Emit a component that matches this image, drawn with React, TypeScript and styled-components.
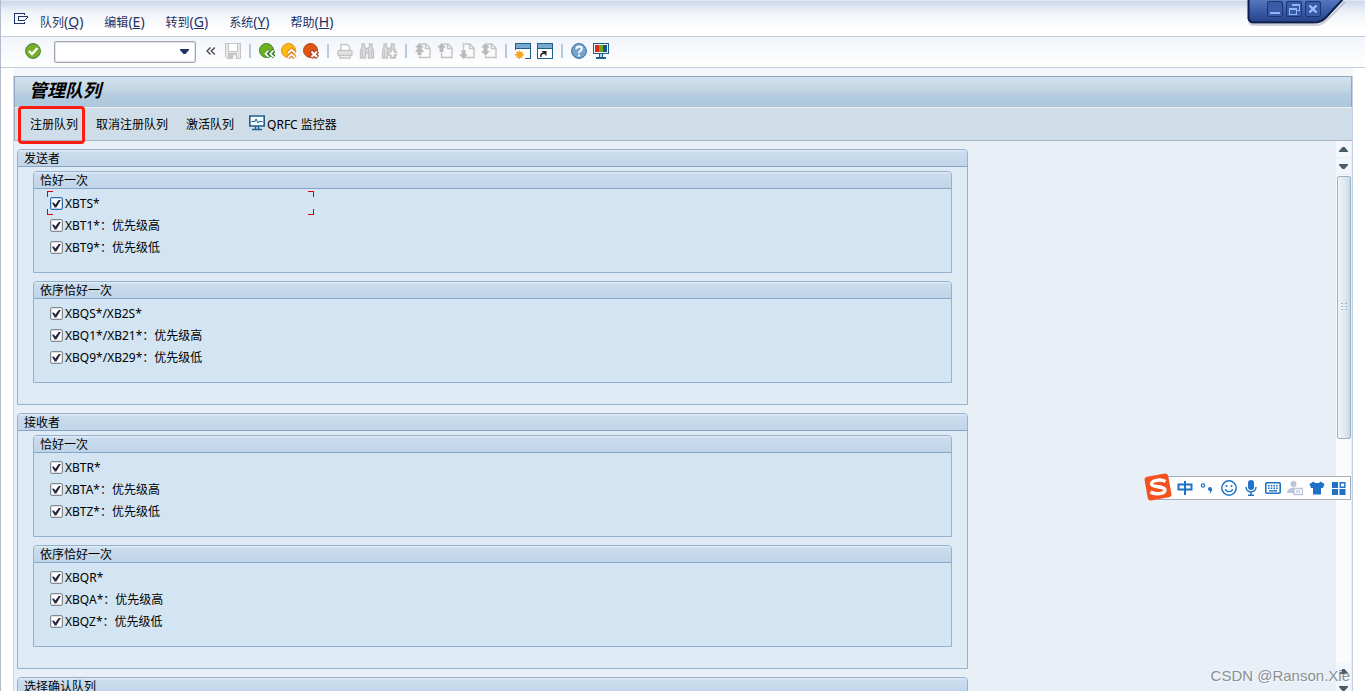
import React from 'react';
import styled, { createGlobalStyle, css } from 'styled-components';

const GlobalStyle = createGlobalStyle`
  *, *::before, *::after { box-sizing: border-box; }
  html, body { margin: 0; }
  body, button, input, select {
    font-family: "Noto Sans", "Noto Sans CJK SC", sans-serif;
    font-size: 12px;
    line-height: 16px;
    color: #000;
  }
  button { padding: 0; border: 0; background: none; }
  svg { display: block; }
`;

const Shell = styled.div`
  height: 100vh;
  display: flex;
  flex-direction: column;
  overflow: hidden;
  background: #fff;
  border-left: 1px solid #b2bccc;
`;

const MenuBar = styled.nav`
  flex: none;
  display: flex;
  align-items: center;
  height: 37px;
  padding: 8px 0 0 13px;
  gap: 21px;
  border-top: 1px solid #dfe7f2;
  border-bottom: 1px solid #c3cbdb;
  background: linear-gradient(#cbd8ea, #eef2f8 30%, #fff 80%);
`;

const SystemButton = styled.button`
  width: 15px;
  height: 12px;
  margin: 0 -10px 8px 0;
`;

const MenuItem = styled.button`
  color: #1f3263;
  white-space: nowrap;
`;

const AccessKey = styled.span`
  font-size: 14px;
`;

const CommandBar = styled.div`
  flex: none;
  display: flex;
  align-items: center;
  height: 31px;
  padding: 0 21px;
  border-bottom: 1px solid #c6cbdb;
  background: linear-gradient(#f1f4fa, #fff);
`;

const IconButton = styled.button`
  flex: none;
  width: 22px;
  height: 22px;
  padding-bottom: 2px;
  display: flex;
  align-items: center;
  justify-content: center;
`;

const Divider = styled.span`
  width: 2px;
  height: 14px;
  margin: 0 5px 2px;
  background: #b5cde3;
`;

const Combo = styled.div`
  position: relative;
  width: 142px;
  height: 22px;
  margin: 0 4px 0 10px;

  select {
    appearance: none;
    width: 100%;
    height: 100%;
    border: 1px solid #a3a8af;
    box-shadow: inset 0 0 0 1px #dfe2e6;
    border-radius: 2px;
    background: #fff;
  }
  svg {
    position: absolute;
    right: 7px;
    top: 8px;
    pointer-events: none;
  }
`;

const Workspace = styled.main`
  flex: 1;
  min-height: 0;
  display: flex;
  flex-direction: column;
  margin: 8px 12px 0 12px;
  border-left: 1px solid #cdd6e2;
  border-right: 1px solid #c2cfe0;
  box-shadow: 0 -8px 0 #f4f6fb;
`;

const TitleBar = styled.header`
  flex: none;
  height: 31px;
  padding: 0 14px;
  border: 1px solid #8fa9c2;
  border-bottom: 0;
  background: linear-gradient(#d3e2ee, #c1d5e4 45%, #b4ccdf 60%, #adc7dd);

  h1 {
    margin: 0;
    font-size: 18px;
    line-height: 26px;
    font-style: italic;
    font-weight: 700;
  }
`;

const ActionBar = styled.div`
  flex: none;
  display: flex;
  align-items: center;
  gap: 18px;
  height: 34px;
  padding: 2px 15px 0;
  border-left: 1px solid #a2b3c7;
  border-top: 1px solid #e6eff6;
  border-bottom: 1px solid #a5b3c6;
  background: #cfdde8;
`;

const ActionButton = styled.button<{ $marked?: boolean }>`
  position: relative;
  display: flex;
  align-items: center;
  gap: 2px;
  white-space: nowrap;

  svg { margin: 0 0 4px -3px; }

  ${p => p.$marked && css`
    &::after {
      content: '';
      position: absolute;
      inset: -11px -7px -11px -12px;
      border: 3px solid #fb1e10;
      border-radius: 4px;
      z-index: 1;
    }
  `}
`;

const Body = styled.div`
  flex: 1;
  min-height: 0;
  display: flex;
  background: #e8eff7;
`;

const Groups = styled.div`
  flex: 1;
  min-width: 0;
  overflow: hidden;
  padding: 8px 3px;
`;

const Group = styled.section`
  max-width: 951px;
  margin-bottom: 8px;
  border: 1px solid #94b1d1;
  border-radius: 4px 4px 0 0;
  background: #deeaf4;
`;

const GroupTitle = styled.h2`
  margin: 0;
  height: 17px;
  padding: 0 6px;
  font-size: 12px;
  font-weight: 400;
  line-height: 18px;
  border-bottom: 1px solid #86a5c8;
  border-radius: 3px 3px 0 0;
  background: linear-gradient(#e3edf6, #cbdced 15%, #bfd5e9);
`;

const GroupBody = styled.div`
  padding: 4px 15px 13px;
`;

const SubGroup = styled(Group)`
  background: #d3e5f3;
`;

const Row = styled.label`
  position: relative;
  display: flex;
  align-items: center;
  gap: 2px;
  width: 265px;
  height: 22px;
  padding-left: 1px;
`;

const Focus = styled.span`
  position: absolute;
  inset: -2px 0 0 -2px;
  pointer-events: none;
  --c: #d9000d;
  background:
    linear-gradient(var(--c), var(--c)) 0 0 / 6px 1px,
    linear-gradient(var(--c), var(--c)) 0 0 / 1px 6px,
    linear-gradient(var(--c), var(--c)) 100% 0 / 6px 1px,
    linear-gradient(var(--c), var(--c)) 100% 0 / 1px 6px,
    linear-gradient(var(--c), var(--c)) 0 100% / 6px 1px,
    linear-gradient(var(--c), var(--c)) 0 100% / 1px 6px,
    linear-gradient(var(--c), var(--c)) 100% 100% / 6px 1px,
    linear-gradient(var(--c), var(--c)) 100% 100% / 1px 6px;
  background-repeat: no-repeat;
`;

const Check = styled.input<{ $focused?: boolean }>`
  appearance: none;
  flex: none;
  width: 13px;
  height: 13px;
  margin: 0 0 2px;
  border: 1px solid ${p => (p.$focused ? '#2f6db0' : '#858a90')};
  border-radius: 2px;
  background: #fff;
  box-shadow: inset 0 0 0 1px ${p => (p.$focused ? '#bcd4ee' : '#dcdfe2')};

  &:checked::after {
    content: '';
    display: block;
    width: 9px;
    height: 8px;
    margin: 2px 1px 1px;
    background: #26263f;
    clip-path: polygon(0 42%, 20% 38%, 38% 64%, 78% 0, 100% 4%, 48% 100%, 30% 100%);
  }
`;

const ScrollBar = styled.div`
  flex: none;
  width: 15px;
  display: flex;
  flex-direction: column;
  margin: 0 1px -6px 0;
  background: #e9eef3;
`;

const ScrollButton = styled.button`
  flex: none;
  height: 16px;
  margin-bottom: 1px;
  display: flex;
  align-items: center;
  justify-content: center;
  background: #f3f6fa;
`;

const Track = styled.div`
  flex: 1;
  min-height: 0;
  padding: 1px 0 0 1px;
  background: #fafbfd;
`;

const Thumb = styled.div`
  height: 54%;
  display: flex;
  align-items: center;
  justify-content: center;
  border: 1px solid #9fb0c2;
  border-radius: 2px;
  background: linear-gradient(90deg, #f0f5f9, #e2ecf4 40%, #dbe7f0 65%, #c9d8e6);
`;

const WindowControls = styled.div`
  position: absolute;
  top: 0;
  right: 19px;
  width: 100px;
  height: 28px;

  > svg { position: absolute; inset: 0; }
`;

const WindowButtons = styled.div`
  position: relative;
  display: flex;
  gap: 3px;
  padding: 1px 0 0 21px;
`;

const WindowButton = styled.button`
  width: 16px;
  height: 16px;
  border: 1px solid #1b3576;
  border-radius: 2px;
  background: #3a5ba5;
`;

const ImeBar = styled.div`
  position: absolute;
  right: 14px;
  top: 476px;
  display: flex;
  align-items: center;
  height: 24px;
  padding: 1px 0 0 16px;
  border: 1px solid #a6adba;
  background: #fff;
`;

const ImeLogo = styled.div`
  position: absolute;
  left: -15px;
  top: -5px;
`;

const Watermark = styled.div`
  position: absolute;
  right: 15px;
  bottom: 5px;
  font-family: "Liberation Sans", sans-serif;
  font-size: 15px;
  line-height: 20px;
  color: #8b8f94;
  text-shadow: 1px 1px 0 #f8fafc;
`;

const GREY = '#c3c4c5';
const NAVY = '#1e5f8c';

const Svg = ({ children, w = 16, h = 16, crisp }: { children: React.ReactNode; w?: number; h?: number; crisp?: boolean }) => (
  <svg width={w} height={h} viewBox={`0 0 ${w} ${h}`} fill="none" shapeRendering={crisp ? 'crispEdges' : 'auto'} aria-hidden="true">
    {children}
  </svg>
);

const Ball = ({ fill, edge, children }: { fill: string; edge: string; children: React.ReactNode }) => (
  <Svg>
    <circle cx="7.5" cy="7.5" r="7" fill={fill} stroke={edge} />
    {children}
  </Svg>
);

const OkIcon = () => (
  <Svg>
    <circle cx="8" cy="8" r="7.4" fill="#76b02a" stroke="#3f7f3c" />
    <path d="M4 8l3 3 5.5-6" stroke="#fff" strokeWidth="2.4" />
  </Svg>
);

const BackIcon = () => (
  <Ball fill="#6fb01f" edge="#3c8428">
    <path d="M10.500 7.500L7.300 10.700l3.200 3.200M15.200 7.500L12 10.700l3.200 3.200" stroke="#3f8532" strokeWidth="4" />
    <path d="M9.500 7.500L6.300 10.700l3.200 3.200M14.500 7.500L11.300 10.700l3.200 3.200" stroke="#fff" strokeWidth="1.600" />
  </Ball>
);

const ExitIcon = () => (
  <Ball fill="#fdb813" edge="#e08a1b">
    <path d="M7 10.200l3.600-3.500 3.600 3.500M7 14.700l3.600-3.500 3.600 3.500" stroke="#e2801c" strokeWidth="4" />
    <path d="M7 10.200l3.600-3.500 3.600 3.500M7 14.700l3.600-3.500 3.600 3.500" stroke="#fff" strokeWidth="1.800" />
  </Ball>
);

const CancelIcon = () => (
  <Ball fill="#dd5613" edge="#b8471c">
    <path d="M8 8l6.500 6.500M14.500 8L8 14.500" stroke="#b03c18" strokeWidth="4.500" />
    <path d="M8.500 8.500l5.500 5.500M14 8.500L8.500 14" stroke="#fff" strokeWidth="2.200" />
  </Ball>
);

const SaveIcon = () => (
  <Svg crisp>
    <path d="M0 0h16v16H2l-2-2z" fill={GREY} />
    <path d="M1 1h14v14H2.500L1 13.500z" fill="#e6e6e7" />
    <path d="M3 0h10v9H3z" fill={GREY} />
    <path d="M4 1h8v7H4z" fill="#fff" />
    <path d="M3 10h9v6H3z" fill={GREY} />
    <path d="M8 12h3v4H8z" fill="#f4f4f5" />
  </Svg>
);

const PrintIcon = () => (
  <Svg>
    <path d="M4 7V1.500h6l2.500 2.500v3" fill="#fff" stroke={GREY} strokeWidth="1.400" />
    <rect x="1" y="7.500" width="14" height="5" rx="1" fill="#e4e4e5" stroke={GREY} strokeWidth="1.400" />
    <path d="M3 12.500v2.500h10v-2.500z" fill="#fff" stroke={GREY} strokeWidth="1.400" />
  </Svg>
);

const FindIcon = ({ more }: { more?: boolean }) => (
  <Svg>
    <path d="M3 1h2.500v3L7 5.500h2L10.500 4V1H13v3l1.500 4v7H9.500v-5h-3v5h-5V8L3 4z" fill="#dededf" stroke={GREY} strokeWidth="1.400" />
    <path d="M6.500 5.500V10M9.500 5.500V10M3.500 7v7M12.500 7v7" stroke={GREY} />
    {more && <path d="M10 6.500h3v2.500h2.500v3H13v2.500h-3V12H7.500V9H10z" fill="#fff" stroke={GREY} strokeWidth="1.400" />}
  </Svg>
);

const pageArrows = {
  first: 'M4.5 0L9 4.500H6.500v1L9 9H6.500v3h-4V9H0l2.500-3.500v-1H0z',
  previous: 'M4.5 0L9 4.500H6.500V9h-4V4.500H0z',
  next: 'M4.5 16L9 11.500H6.500V7h-4v4.500H0z',
  last: 'M4.5 0L9 4.500H6.500V8H9l-4.500 4.500L0 8h2.500V4.500H0z',
};

const PageIcon = ({ kind }: { kind: keyof typeof pageArrows }) => (
  <Svg>
    <path d="M4.500 1h6.500l4 4v9.500H4.500z" fill="#fafafb" stroke={GREY} strokeWidth="1.400" />
    <path d="M10.500 1v4.500H15" stroke={GREY} strokeWidth="1.400" />
    <path d={pageArrows[kind]} fill="#b9babb" stroke="#fafafb" strokeWidth="1" paintOrder="stroke" />
  </Svg>
);

const SessionIcon = ({ shortcut }: { shortcut?: boolean }) => (
  <Svg crisp>
    <path d="M0 0h16v16H0z" fill={NAVY} />
    <path d="M1 6h14v9H1z" fill="#fff" />
    <path d="M1 1h14v4H1z" fill="#79a9cf" />
    {shortcut ? (
      <g shapeRendering="auto">
        <path d="M4 14c-.5-2.500 0-3.500 3.500-4" stroke="#222" strokeWidth="1.500" />
        <path d="M4.500 8h5v5z" fill="#222" />
      </g>
    ) : (
      <g shapeRendering="auto">
        <path d="M0 7h10v9H0z" fill="#fff" />
        <path d="M4.500 7.500v8.500M0 11.700h9M1.500 8.700l6 6M7.500 8.700l-6 6" stroke="#f5a11a" strokeWidth="1.400" />
        <circle cx="4.500" cy="11.700" r="3" fill="#f9a51c" />
      </g>
    )}
  </Svg>
);

const HelpIcon = () => (
  <Svg>
    <circle cx="8" cy="8" r="7.400" fill="#76a5cc" stroke="#326c9e" />
    <path d="M5.300 6.300C5.300 4.500 6.500 3.500 8 3.500c1.600 0 2.800 1 2.800 2.500C10.800 7.800 8 8 8 10.200M8 11.500v2" stroke="#fff" strokeWidth="1.900" />
  </Svg>
);

const LayoutIcon = () => (
  <Svg crisp>
    <path d="M0 0h16v11H0z" fill={NAVY} />
    <path d="M1 1h14v9H1z" fill="#eef4f8" />
    <path d="M2 2h4v7H2z" fill="#d92a1c" />
    <path d="M6 2h4v7H6z" fill="#6ea91e" />
    <path d="M10 2h4v7h-4z" fill="#17558e" />
    <path d="M6 11h4v3H6zM3 14h10v2H3z" fill={NAVY} />
    <path d="M7 11h2v3H7z" fill="#b9d3e6" />
  </Svg>
);

const MonitorIcon = () => (
  <Svg>
    <path d="M.8 1h14.400v10H.8z" fill="#f5fafd" stroke={NAVY} strokeWidth="1.600" />
    <path d="M2.500 6.500h3.500l1-2.500 2 4 1-1.500h3.500" stroke={NAVY} />
    <path d="M6.500 11v3M9.500 11v3M3 14.500h10" stroke={NAVY} strokeWidth="1.400" />
  </Svg>
);

const SystemIcon = () => (
  <Svg w={15} h={12} crisp>
    <path d="M10.500 2V.5H.5v10h10V9M4.500 3.500v4h5M4 3.500h10M14 4l-4 4" stroke="#1f3263" />
  </Svg>
);

const Arrow = ({ up, color = '#465a6a' }: { up?: boolean; color?: string }) => (
  <Svg w={9} h={5}>
    <path d={up ? 'M0 5V4L3.500 0h2L9 4v1z' : 'M0 0h9v1L5.500 5h-2L0 1z'} fill={color} />
  </Svg>
);

const Grip = () => (
  <Svg w={7} h={9} crisp>
    <path d="M0 0h2v1H0zM4 0h2v1H4zM0 3h2v1H0zM4 3h2v1H4zM0 6h2v1H0zM4 6h2v1H4z" fill="#a3b4c5" />
    <path d="M0 1h1v1H0zM4 1h1v1H4zM0 4h1v1H0zM4 4h1v1H4zM0 7h1v1H0zM4 7h1v1H4z" fill="#fff" />
  </Svg>
);

const BLUE = '#1f72c6';

const imeTools: { label: string; icon: React.ReactNode }[] = [
  { label: '中', icon: <Svg><path d="M1.500 4.500h13v5h-13zM8 1v14" stroke={BLUE} strokeWidth="2" /></Svg> },
  { label: '标点', icon: <Svg><circle cx="4" cy="5.500" r="1.700" stroke={BLUE} strokeWidth="1.200" /><path d="M9 9a2 2 0 1 1 4 0c0 2.500-1 4-3 5 1-1.200 1.300-2 1.200-3C9.800 11 9 10.200 9 9z" fill={BLUE} /></Svg> },
  { label: '表情', icon: <Svg><circle cx="8" cy="8" r="7.200" stroke={BLUE} strokeWidth="1.500" /><circle cx="5.500" cy="6" r="1" fill={BLUE} /><circle cx="10.500" cy="6" r="1" fill={BLUE} /><path d="M4.500 9c.5 3.500 6.500 3.500 7 0" stroke={BLUE} strokeWidth="1.300" /></Svg> },
  { label: '语音', icon: <Svg><rect x="5" y="0" width="6" height="10" rx="3" fill={BLUE} /><path d="M3 7c0 6.500 10 6.500 10 0M8 12v3M5 15.200h6" stroke={BLUE} strokeWidth="1.500" /></Svg> },
  { label: '键盘', icon: <Svg><rect x=".8" y="2.800" width="14.400" height="10.400" rx="1" stroke={BLUE} strokeWidth="1.600" /><path d="M3 5.700h10M3 8.200h10" stroke={BLUE} strokeWidth="1.600" strokeDasharray="1.600 1.100" /><path d="M4 10.800h8" stroke={BLUE} strokeWidth="1.400" /></Svg> },
  { label: '账户', icon: <Svg><circle cx="6.500" cy="4" r="3" fill="#b8c5da" /><path d="M0 13c0-6 9-6 10-4v4z" fill="#b8c5da" /><path d="M7 8.500h8.500v6H7zM10 10v3M12.500 10v3" fill="#fff" stroke="#b8c5da" strokeWidth="1.300" /></Svg> },
  { label: '皮肤', icon: <Svg><path d="M4.500 1.500c1 2 6 2 7 0L15.500 4 14 8h-2v6.500H4V8H2L.5 4z" fill={BLUE} /></Svg> },
  { label: '工具箱', icon: <Svg><path d="M1 2h6v6H1zM1 9h6v6H1zM8.500 9h6v6h-6z" fill={BLUE} /><path d="M9.200 2.700h4.600v4.600H9.200z" stroke={BLUE} strokeWidth="1.400" /></Svg> },
];

const menus = [
  ['队列', 'Q'],
  ['编辑', 'E'],
  ['转到', 'G'],
  ['系统', 'Y'],
  ['帮助', 'H'],
];

type Tool = { label: string; icon: React.ReactNode } | null;

const tools: Tool[] = [
  { label: '保存', icon: <SaveIcon /> },
  null,
  { label: '返回', icon: <BackIcon /> },
  { label: '退出', icon: <ExitIcon /> },
  { label: '取消', icon: <CancelIcon /> },
  null,
  { label: '打印', icon: <PrintIcon /> },
  { label: '查找', icon: <FindIcon /> },
  { label: '继续查找', icon: <FindIcon more /> },
  null,
  { label: '首页', icon: <PageIcon kind="first" /> },
  { label: '上一页', icon: <PageIcon kind="previous" /> },
  { label: '下一页', icon: <PageIcon kind="next" /> },
  { label: '末页', icon: <PageIcon kind="last" /> },
  null,
  { label: '新建会话', icon: <SessionIcon /> },
  { label: '创建快捷方式', icon: <SessionIcon shortcut /> },
  null,
  { label: '帮助', icon: <HelpIcon /> },
  { label: '定制布局', icon: <LayoutIcon /> },
];

const groups = [
  {
    title: '发送者',
    parts: [
      { title: '恰好一次', rows: ['XBTS*', 'XBT1*：优先级高', 'XBT9*：优先级低'] },
      { title: '依序恰好一次', rows: ['XBQS*/XB2S*', 'XBQ1*/XB21*：优先级高', 'XBQ9*/XB29*：优先级低'] },
    ],
  },
  {
    title: '接收者',
    parts: [
      { title: '恰好一次', rows: ['XBTR*', 'XBTA*：优先级高', 'XBTZ*：优先级低'] },
      { title: '依序恰好一次', rows: ['XBQR*', 'XBQA*：优先级高', 'XBQZ*：优先级低'] },
    ],
  },
  { title: '选择确认队列', parts: [] },
];

export default function App() {
  return (
    <Shell>
      <GlobalStyle />
      <MenuBar>
        <SystemButton aria-label="系统菜单"><SystemIcon /></SystemButton>
        {menus.map(([name, key]) => (
          <MenuItem key={key}>{name}<AccessKey>(<u>{key}</u>)</AccessKey></MenuItem>
        ))}
      </MenuBar>

      <CommandBar>
        <IconButton aria-label="确认"><OkIcon /></IconButton>
        <Combo>
          <select aria-label="命令"><option value="" /></select>
          <Arrow color="#1f3263" />
        </Combo>
        <IconButton aria-label="收起">
          <Svg w={10} h={8}><path d="M4.500.5L1 4l3.500 3.500M8.800.5L5.300 4l3.500 3.500" stroke="#444" strokeWidth="1.300" /></Svg>
        </IconButton>
        {tools.map((tool, i) =>
          tool ? <IconButton key={i} aria-label={tool.label}>{tool.icon}</IconButton> : <Divider key={i} />
        )}
      </CommandBar>

      <Workspace>
        <TitleBar><h1>管理队列</h1></TitleBar>
        <ActionBar>
          <ActionButton $marked>注册队列</ActionButton>
          <ActionButton>取消注册队列</ActionButton>
          <ActionButton>激活队列</ActionButton>
          <ActionButton><MonitorIcon />QRFC 监控器</ActionButton>
        </ActionBar>
        <Body>
          <Groups>
            {groups.map((group, g) => (
              <Group key={group.title}>
                <GroupTitle>{group.title}</GroupTitle>
                <GroupBody>
                  {group.parts.map((part, p) => (
                    <SubGroup key={part.title}>
                      <GroupTitle as="h3">{part.title}</GroupTitle>
                      <GroupBody>
                        {part.rows.map((row, r) => {
                          const focused = g + p + r === 0;
                          return (
                            <Row key={row}>
                              <Check type="checkbox" defaultChecked $focused={focused} />
                              {row}
                              {focused && <Focus />}
                            </Row>
                          );
                        })}
                      </GroupBody>
                    </SubGroup>
                  ))}
                </GroupBody>
              </Group>
            ))}
          </Groups>
          <ScrollBar>
            <ScrollButton aria-label="向上"><Arrow up /></ScrollButton>
            <ScrollButton aria-label="向下"><Arrow /></ScrollButton>
            <Track><Thumb><Grip /></Thumb></Track>
            <ScrollButton aria-label="上一行"><Arrow up /></ScrollButton>
            <ScrollButton aria-label="下一行"><Arrow /></ScrollButton>
          </ScrollBar>
        </Body>
      </Workspace>

      <WindowControls>
        <Svg w={100} h={28}>
          <defs>
            <linearGradient id="tab" x1="0" y1="0" x2="0" y2="1">
              <stop offset="0" stopColor="#5577bd" />
              <stop offset=".5" stopColor="#3a5ca8" />
              <stop offset="1" stopColor="#27428a" />
            </linearGradient>
          </defs>
          <path d="M3 0v20q0 5 5 5h61q7 0 13-6L99 2" stroke="#9aa3b5" strokeOpacity=".5" strokeWidth="2" />
          <path d="M2 0v18q1 4 5 4h61q7 0 12-5L95 0z" fill="url(#tab)" />
          <path d="M2.500 0v18.500q1 4 5 4H68q7 0 12-5L97-1" stroke="#0d1c4a" strokeWidth="2" />
        </Svg>
        <WindowButtons>
          <WindowButton aria-label="最小化"><Svg w={14} h={14} crisp><path d="M2 10h10v2H2z" fill="#8fb4fb" /></Svg></WindowButton>
          <WindowButton aria-label="还原"><Svg w={14} h={14} crisp><path d="M5 4V2h7v6h-2M2 6h7v6H2zM5 3h7M2 7h7" stroke="#8fb4fb" /></Svg></WindowButton>
          <WindowButton aria-label="关闭"><Svg w={14} h={14}><path d="M3.500 3.500l7 7M10.500 3.500l-7 7" stroke="#9dbeff" strokeWidth="2.400" /></Svg></WindowButton>
        </WindowButtons>
      </WindowControls>

      <ImeBar>
        <ImeLogo>
          <Svg w={30} h={30}>
            <rect x="3" y="3" width="24" height="24" rx="3" fill="#f4511e" transform="rotate(-10 15 15)" />
            <path d="M22.500 9.500C17 6.500 8.500 8.500 8.500 12c0 3.500 13.500 2 13.500 6 0 4-10 5-14.500 2" stroke="#fff" strokeWidth="3.400" />
          </Svg>
        </ImeLogo>
        {imeTools.map(t => (
          <IconButton key={t.label} aria-label={t.label}>{t.icon}</IconButton>
        ))}
      </ImeBar>

      <Watermark>CSDN @Ranson.Xie</Watermark>
    </Shell>
  );
}
